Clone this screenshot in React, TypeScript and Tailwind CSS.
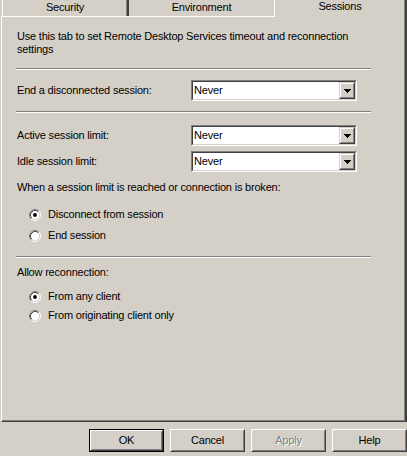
import type { ReactNode } from 'react';

const FACE = 'bg-[#d4d0c8]';

// Classic 3D radio button, 12x12
function RadioMark({ checked }: { checked?: boolean }) {
  return (
    <svg width="12" height="12" viewBox="0 0 12 12" className="shrink-0">
      <circle cx="6" cy="6" r="4.5" fill="#fff" />
      <path d="M2.11 9.89A5.5 5.5 0 0 1 9.89 2.11" fill="none" stroke="#808080" />
      <path d="M9.89 2.11A5.5 5.5 0 0 1 2.11 9.89" fill="none" stroke="#fff" />
      <path d="M2.82 9.18A4.5 4.5 0 0 1 9.18 2.82" fill="none" stroke="#404040" />
      <path d="M9.18 2.82A4.5 4.5 0 0 1 2.82 9.18" fill="none" stroke="#d4d0c8" />
      {checked && <circle cx="6" cy="6" r="1.9" fill="#000" />}
    </svg>
  );
}

function Radio({ label, checked, className }: { label: string; checked?: boolean; className: string }) {
  return (
    <div className={`flex items-center h-[13px] pl-[12px] gap-[7px] ${className}`}>
      <RadioMark checked={checked} />
      <span>{label}</span>
    </div>
  );
}

function Separator({ className }: { className: string }) {
  return <div className={`-ml-px w-[355px] border-t border-b border-t-[#808080] border-b-white ${className}`} />;
}

function DropArrow() {
  return (
    <svg width="7" height="4" viewBox="0 0 7 4" shapeRendering="crispEdges">
      <path d="M0 0h7v1h-1v1h-1v1h-1v1h-1v-1h-1v-1h-1v-1h-1z" fill="#000" />
    </svg>
  );
}

function Combo({ value }: { value: string }) {
  return (
    <div className="w-[166px] h-[21px] border border-t-[#808080] border-l-[#808080] border-b-white border-r-white">
      <div className="h-full flex items-center bg-white border border-t-[#404040] border-l-[#404040] border-b-[#d4d0c8] border-r-[#d4d0c8]">
        <span className="flex-1 pl-px">{value}</span>
        <div className="w-[16px] h-[17px] border border-t-[#d4d0c8] border-l-[#d4d0c8] border-b-[#404040] border-r-[#404040]">
          <div className={`h-full flex items-center justify-center ${FACE} border border-t-white border-l-white border-b-[#808080] border-r-[#808080]`}>
            <DropArrow />
          </div>
        </div>
      </div>
    </div>
  );
}

function LabeledCombo({ label, value, className }: { label: string; value: string; className: string }) {
  return (
    <div className={`flex items-center ${className}`}>
      <span className="w-[174px]">{label}</span>
      <Combo value={value} />
    </div>
  );
}

function PushButton({ children, isDefault, disabled }: { children: ReactNode; isDefault?: boolean; disabled?: boolean }) {
  const face = (
    <div className="h-full border border-t-white border-l-white border-b-[#404040] border-r-[#404040]">
      <div className="h-full flex items-center justify-center border border-t-[#d4d0c8] border-l-[#d4d0c8] border-b-[#808080] border-r-[#808080]">
        <span className={disabled ? 'text-[#808080] [text-shadow:1px_1px_0_#fff]' : ''}>{children}</span>
      </div>
    </div>
  );
  return (
    <div className={`w-[75px] h-[23px] ${isDefault ? 'border border-black' : ''}`}>
      {face}
    </div>
  );
}

export default function App() {
  return (
    <div className={`w-[407px] h-[456px] overflow-hidden ${FACE} text-black text-[11px] leading-[13px] tracking-[-0.2px] font-['Liberation_Sans',Arial,sans-serif]`}>
      {/* Tab strip */}
      <div className="flex h-[16px] pl-[2px]">
        <div className="w-[127px] h-[16px] pt-px text-center border-l border-l-white border-r-2 border-r-[#404040] shadow-[inset_-1px_0_0_#808080]">
          Security
        </div>
        <div className="w-[145px] h-[16px] pt-px text-center">Environment</div>
        <div className={`relative z-10 w-[133px] h-[17px] text-center ${FACE} border-l border-l-white border-r-2 border-r-[#404040] shadow-[inset_-1px_0_0_#808080]`}>
          Sessions
        </div>
      </div>

      {/* Sessions page */}
      <div className="ml-px w-[406px] h-[406px] border-l border-t border-white border-r-2 border-r-[#404040] border-b border-b-[#404040] shadow-[inset_-1px_-1px_0_#808080] pl-[15px] pt-[13px]">
        <p className="w-[355px]">Use this tab to set Remote Desktop Services timeout and reconnection settings</p>

        <Separator className="mt-[12px]" />
        <LabeledCombo className="mt-[10px]" label="End a disconnected session:" value="Never" />

        <Separator className="mt-[10px]" />
        <LabeledCombo className="mt-[12px]" label="Active session limit:" value="Never" />
        <LabeledCombo className="mt-[5px]" label="Idle session limit:" value="Never" />

        <p className="mt-[9px]">When a session limit is reached or connection is broken:</p>
        <Radio className="mt-[14px]" label="Disconnect from session" checked />
        <Radio className="mt-[8px]" label="End session" />

        <Separator className="mt-[14px]" />
        <p className="mt-[8px]">Allow reconnection:</p>
        <Radio className="mt-[11px]" label="From any client" checked />
        <Radio className="mt-[6px]" label="From originating client only" />
      </div>

      {/* Dialog buttons */}
      <div className="flex justify-end gap-[6px] mt-[7px]">
        <PushButton isDefault>OK</PushButton>
        <PushButton>Cancel</PushButton>
        <PushButton disabled>Apply</PushButton>
        <PushButton>Help</PushButton>
      </div>
    </div>
  );
}
